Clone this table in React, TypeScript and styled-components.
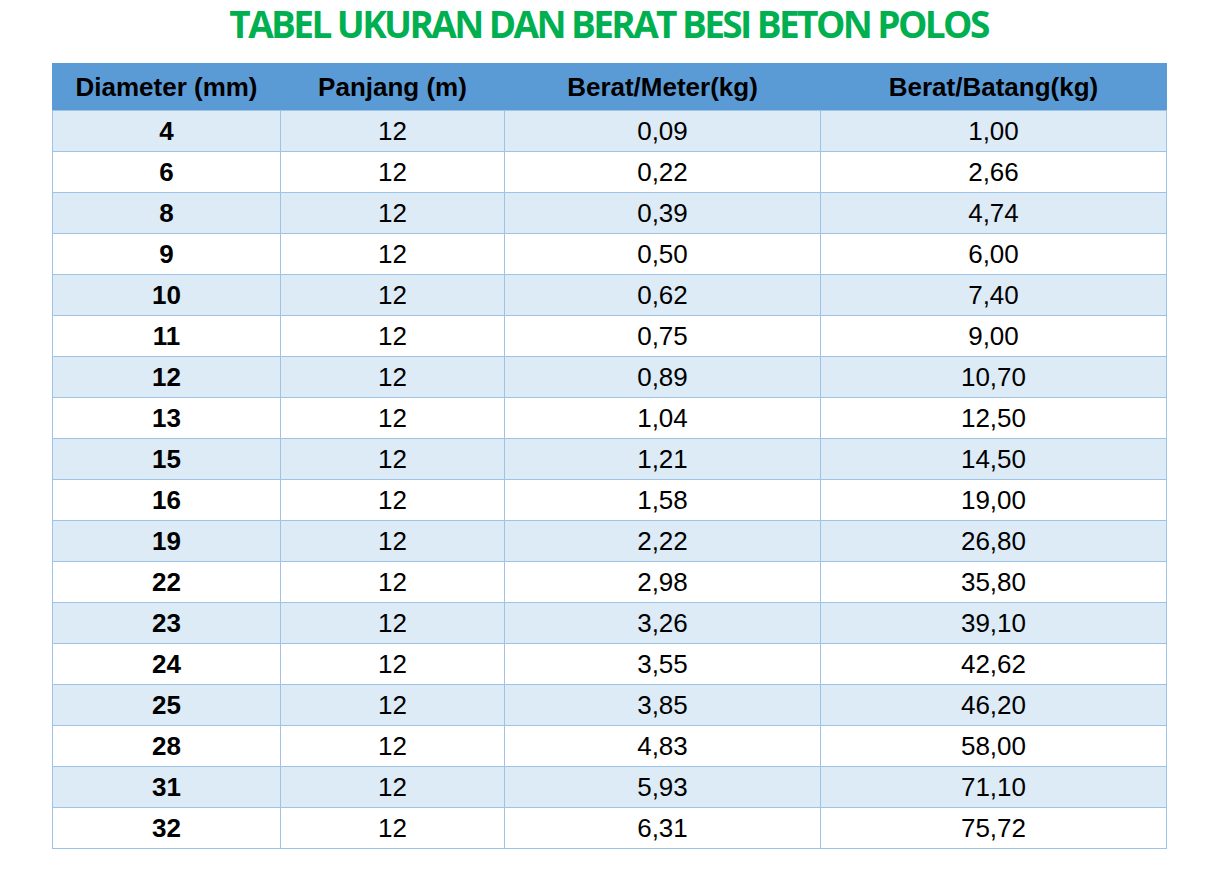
import React from "react";
import styled, { createGlobalStyle } from "styled-components";

const Global = createGlobalStyle`
  html, body { margin: 0; padding: 0; background: #ffffff; }
  body { font-family: "Liberation Sans", Arial, sans-serif; }
`;

const Page = styled.div`
  width: 1231px;
  height: 878px;
  background: #ffffff;
  display: flex;
  flex-direction: column;
`;

const TitleBar = styled.div`
  height: 63px;
  display: flex;
  justify-content: center;
  align-items: flex-start;
  padding-right: 12px;
`;

const Title = styled.h1`
  margin: -2px 0 0 0;
  padding: 0 6px 0 4px;
  font-family: "Open Sans", "Noto Sans", sans-serif;
  font-weight: 700;
  font-size: 37px;
  line-height: normal;
  letter-spacing: -2.6px;
  color: #00b050;
  white-space: nowrap;
`;

const Table = styled.table`
  margin-left: 52px;
  width: 1114px;
  border-collapse: collapse;
  table-layout: fixed;
`;

const HeadRow = styled.tr`
  height: 47px;
  background: #5b9bd5;
`;

const Th = styled.th`
  padding: 0;
  font-weight: 700;
  font-size: 26px;
  color: #000000;
  text-align: center;
  border: 1px solid #5b9bd5;
  border-bottom-color: #9dc3e6;
`;

const Row = styled.tr<{ $alt: boolean }>`
  height: 41px;
  background: ${(p) => (p.$alt ? "#ddebf7" : "#ffffff")};
`;

const Td = styled.td<{ $bold?: boolean }>`
  padding: 0;
  font-size: 26px;
  font-weight: ${(p) => (p.$bold ? 700 : 400)};
  color: #000000;
  text-align: center;
  border: 1px solid #9dc3e6;
`;

const rows: [string, string, string, string][] = [
  ["4", "12", "0,09", "1,00"],
  ["6", "12", "0,22", "2,66"],
  ["8", "12", "0,39", "4,74"],
  ["9", "12", "0,50", "6,00"],
  ["10", "12", "0,62", "7,40"],
  ["11", "12", "0,75", "9,00"],
  ["12", "12", "0,89", "10,70"],
  ["13", "12", "1,04", "12,50"],
  ["15", "12", "1,21", "14,50"],
  ["16", "12", "1,58", "19,00"],
  ["19", "12", "2,22", "26,80"],
  ["22", "12", "2,98", "35,80"],
  ["23", "12", "3,26", "39,10"],
  ["24", "12", "3,55", "42,62"],
  ["25", "12", "3,85", "46,20"],
  ["28", "12", "4,83", "58,00"],
  ["31", "12", "5,93", "71,10"],
  ["32", "12", "6,31", "75,72"],
];

export default function App() {
  return (
    <Page>
      <Global />
      <TitleBar>
        <Title>TABEL UKURAN DAN BERAT BESI BETON POLOS</Title>
      </TitleBar>
      <Table>
        <colgroup>
          <col style={{ width: 228 }} />
          <col style={{ width: 224 }} />
          <col style={{ width: 316 }} />
          <col style={{ width: 346 }} />
        </colgroup>
        <thead>
          <HeadRow>
            <Th>Diameter (mm)</Th>
            <Th>Panjang (m)</Th>
            <Th>Berat/Meter(kg)</Th>
            <Th>Berat/Batang(kg)</Th>
          </HeadRow>
        </thead>
        <tbody>
          {rows.map((r, i) => (
            <Row key={r[0]} $alt={i % 2 === 0}>
              <Td $bold>{r[0]}</Td>
              <Td>{r[1]}</Td>
              <Td>{r[2]}</Td>
              <Td>{r[3]}</Td>
            </Row>
          ))}
        </tbody>
      </Table>
    </Page>
  );
}
